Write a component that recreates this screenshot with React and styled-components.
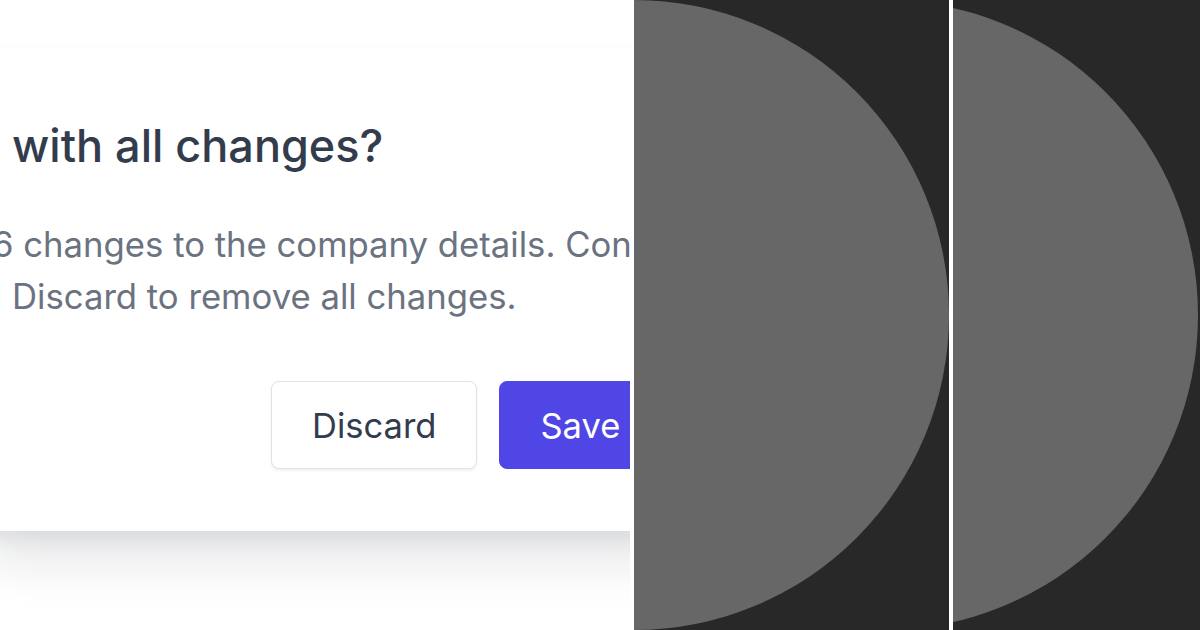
import React from 'react';
import styled, { createGlobalStyle } from 'styled-components';

// ------------- Styled components -------------
const GlobalStyle = createGlobalStyle`
  html, body {
    margin: 0;
    padding: 0;
    background: #ffffff;
    overflow: hidden;
  }
  body {
    font-family: Inter, "Noto Sans", "Liberation Sans", sans-serif;
  }
`;

// painéis lado a lado, separados por 4px de branco
const Page = styled.div`
  display: flex;
  gap: 4px;
  width: 1200px;
  height: 630px;
  background: #ffffff;
`;

const LeftPane = styled.div`
  width: 630px;
  height: 630px;
  flex-shrink: 0;
  overflow: hidden;
  background: #ffffff;
  padding-top: 48px;
  box-sizing: border-box;
`;

const Card = styled.div`
  width: 720px;
  margin-left: -30px;
  padding: 74px 0 62px 44px;
  box-sizing: border-box;
  background: #ffffff;
  box-shadow: 0 40px 50px -14px rgba(17, 24, 39, 0.12),
    0 14px 20px -10px rgba(17, 24, 39, 0.08),
    0 -2px 6px rgba(17, 24, 39, 0.02);
`;

const Title = styled.h2`
  margin: 0 0 0 -2px;
  font-size: 45px;
  line-height: 48px;
  font-weight: 500;
  color: #333c4d;
  white-space: nowrap;
`;

const Description = styled.div`
  margin-top: 48px;
  font-size: 34.7px;
  line-height: 52px;
  color: #6b7280;
`;

const Line = styled.span`
  display: block;
  white-space: nowrap;
  margin-left: ${p => p.$shift || 0}px;
`;

const Actions = styled.div`
  display: flex;
  gap: 22px;
  margin-top: 59px;
  padding-left: 257px;
`;

const Button = styled.button`
  height: 88px;
  padding: 0 40px;
  border-radius: 8px;
  font-family: inherit;
  font-size: 34.5px;
  white-space: nowrap;
  cursor: pointer;
  border: 1px solid ${p => (p.$primary ? '#4f46e5' : '#dfe2e7')};
  background: ${p => (p.$primary ? '#4f46e5' : '#ffffff')};
  color: ${p => (p.$primary ? '#ffffff' : '#333c4d')};
  box-shadow: ${p => (p.$primary ? 'none' : '0 2px 3px rgba(17,24,39,0.06)')};
`;

const DarkPanel = styled.div`
  width: ${p => p.$width}px;
  height: 630px;
  flex-shrink: 0;
  background: #282828;
  overflow: hidden;
`;
// ----------Final styled components -----------

// meio círculo cinza desenhado em svg
function HalfCircle({ width, cx }) {
  return (
    <svg width={width} height="630" viewBox={`0 0 ${width} 630`} style={{ display: 'block' }}>
      <circle cx={cx} cy="315" r="315" fill="#676767" />
    </svg>
  );
}

export default function App() {
  return (
    <Page>
      <GlobalStyle />
      <LeftPane>
        <Card>
          <Title>with all changes?</Title>
          <Description>
            <Line $shift={-22}>6 changes to the company details. Confirm</Line>
            <Line $shift={-2}>Discard to remove all changes.</Line>
          </Description>
          <Actions>
            <Button>Discard</Button>
            <Button $primary>Save changes</Button>
          </Actions>
        </Card>
      </LeftPane>
      <DarkPanel $width={315}>
        <HalfCircle width={315} cx={0} />
      </DarkPanel>
      <DarkPanel $width={247}>
        <HalfCircle width={247} cx={-70} />
      </DarkPanel>
    </Page>
  );
}
